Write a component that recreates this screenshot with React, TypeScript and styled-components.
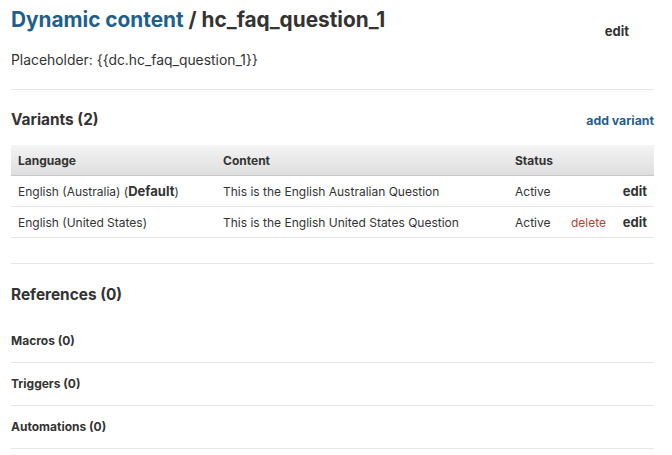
import React from "react";
import styled, { createGlobalStyle } from "styled-components";

const Global = createGlobalStyle`
  html, body { margin: 0; padding: 0; background: #fff; }
  body { font-family: Inter, "Liberation Sans", Arial, Helvetica, sans-serif; color: #333; }
`;

const Page = styled.div`
  width: 672px;
  padding: 0 18px 0 11px;
  box-sizing: border-box;
`;

const Header = styled.div`
  display: flex;
  justify-content: space-between;
  align-items: flex-start;
  padding-top: 7px;
`;

const Title = styled.h1`
  margin: 0;
  font-size: 20.8px;
  line-height: 26px;
  font-weight: 700;
  color: #333;
`;

const TitleLink = styled.span`
  color: #1f5f8c;
`;

const HeaderEdit = styled.span`
  font-size: 13px;
  font-weight: 700;
  color: #333;
  margin-top: 16px;
  margin-right: 25px;
`;

const Placeholder = styled.p`
  margin: 13px 0 0;
  font-size: 13.9px;
  line-height: 16px;
  color: #333;
`;

const Divider = styled.hr`
  border: 0;
  border-top: 1px solid #e6e6e6;
  margin: ${(p: { $top: number }) => p.$top}px 0 0;
`;

const SectionHead = styled.div`
  display: flex;
  justify-content: space-between;
  align-items: center;
  margin-top: ${(p: { $top: number }) => p.$top}px;
`;

const SectionTitle = styled.h2`
  margin: 0;
  font-size: 15.4px;
  line-height: 20px;
  font-weight: 700;
  color: #333;
`;

const AddLink = styled.span`
  font-size: 12.3px;
  font-weight: 700;
  color: #1f5f8c;
`;

const Table = styled.div`
  margin-top: 15px;
  font-size: 12px;
`;

const HeadRow = styled.div`
  display: grid;
  grid-template-columns: 205px 292px 56px 1fr;
  height: 30px;
  align-items: center;
  background: linear-gradient(#f4f4f4, #dedede);
  border-bottom: 1px solid #c8c8c8;
  font-weight: 700;
  color: #333;
  padding-left: 7px;
`;

const Row = styled.div`
  display: grid;
  grid-template-columns: 205px 292px 56px 1fr auto;
  height: 30px;
  align-items: center;
  border-bottom: 1px solid #e6e6e6;
  color: #333;
  padding-left: 7px;
  padding-right: 7px;
`;

const Cell = styled.span``;

const Strong = styled.span`
  font-weight: 700;
  font-size: 13px;
`;

const DeleteLink = styled.span`
  color: #c23b32;
`;

const RowEdit = styled.span`
  font-size: 13px;
  font-weight: 700;
  color: #333;
`;

const RefItem = styled.div`
  font-size: 12px;
  font-weight: 700;
  color: #333;
  height: 43px;
  box-sizing: border-box;
  padding-bottom: 2px;
  display: flex;
  align-items: center;
  border-bottom: 1px solid #e6e6e6;
`;

const RefList = styled.div`
  margin-top: 15px;
`;

export default function App() {
  return (
    <>
      <Global />
      <Page>
        <Header>
          <Title>
            <TitleLink>Dynamic content</TitleLink> / hc_faq_question_1
          </Title>
          <HeaderEdit>edit</HeaderEdit>
        </Header>
        <Placeholder>Placeholder: {"{{dc.hc_faq_question_1}}"}</Placeholder>
        <Divider $top={21} />
        <SectionHead $top={20}>
          <SectionTitle>Variants (2)</SectionTitle>
          <AddLink>add variant</AddLink>
        </SectionHead>
        <Table>
          <HeadRow>
            <Cell>Language</Cell>
            <Cell>Content</Cell>
            <Cell>Status</Cell>
            <Cell />
          </HeadRow>
          <Row>
            <Cell>
              English (Australia) (<Strong>Default</Strong>)
            </Cell>
            <Cell>This is the English Australian Question</Cell>
            <Cell>Active</Cell>
            <Cell />
            <RowEdit>edit</RowEdit>
          </Row>
          <Row>
            <Cell>English (United States)</Cell>
            <Cell>This is the English United States Question</Cell>
            <Cell>Active</Cell>
            <Cell>
              <DeleteLink>delete</DeleteLink>
            </Cell>
            <RowEdit>edit</RowEdit>
          </Row>
        </Table>
        <Divider $top={25} />
        <SectionHead $top={21}>
          <SectionTitle>References (0)</SectionTitle>
        </SectionHead>
        <RefList>
          <RefItem>Macros (0)</RefItem>
          <RefItem>Triggers (0)</RefItem>
          <RefItem>Automations (0)</RefItem>
        </RefList>
      </Page>
    </>
  );
}
